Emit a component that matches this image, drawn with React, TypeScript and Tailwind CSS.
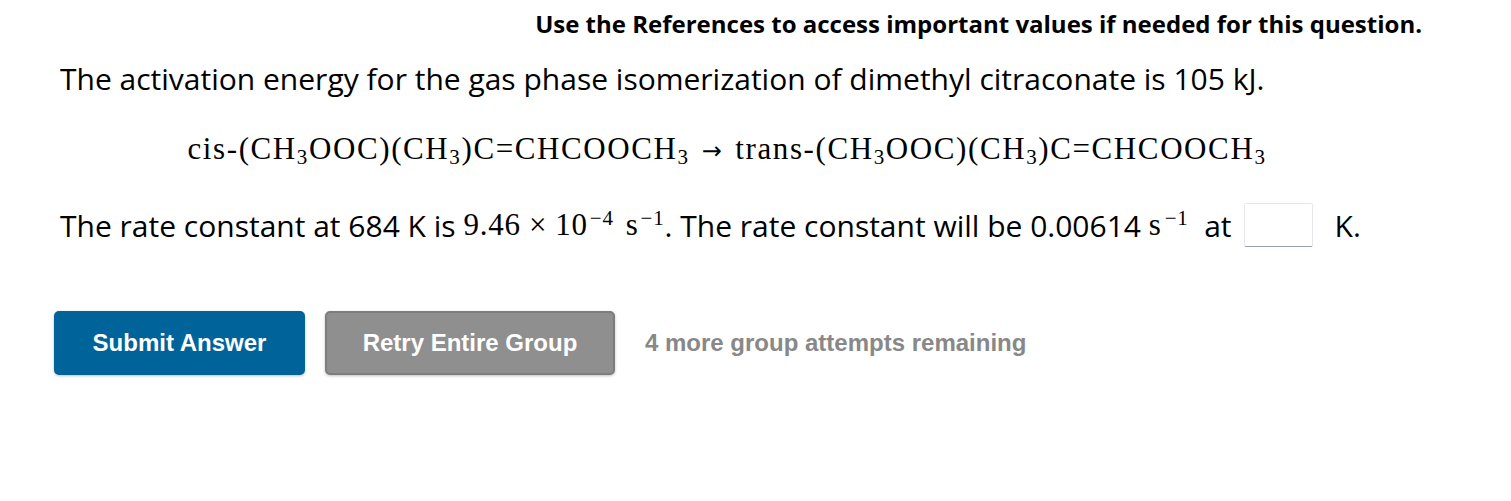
export default function App() {
  const body = { fontFamily: '"Open Sans", "Liberation Sans", sans-serif' }
  const math = { fontFamily: '"Liberation Serif", "DejaVu Serif", serif' }
  const arrow = { fontFamily: '"DejaVu Sans", sans-serif' }
  const btn = { fontFamily: '"Liberation Sans", Arial, sans-serif' }

  return (
    <div className="w-[1511px] h-[501px] bg-white text-black" style={body}>
      <div className="flex justify-end pr-[89px] pt-[6px]">
        <p className="text-[24px] font-bold leading-[36px]">
          Use the References to access important values if needed for this question.
        </p>
      </div>

      <div className="pl-[60px] pr-[117px]">
        <p className="mt-[17px] text-[30px] leading-[40px]">
          The activation energy for the gas phase isomerization of dimethyl citraconate is 105 kJ.
        </p>

        <p className="mt-[30px] text-center text-[31px] leading-[40px] tracking-[1.6px]" style={math}>
          cis-(CH<sub className="text-[21px]">3</sub>OOC)(CH<sub className="text-[21px]">3</sub>)C=CHCOOCH
          <sub className="text-[21px]">3</sub>
          <span className="mx-[12px] text-[24px]" style={arrow}>→</span>
          trans-(CH<sub className="text-[21px]">3</sub>OOC)(CH<sub className="text-[21px]">3</sub>)C=CHCOOCH
          <sub className="text-[21px]">3</sub>
        </p>

        <div className="mt-[31px] flex items-center text-[30px]">
          <span>The rate constant at 684 K is&nbsp;</span>
          <span style={math} className="text-[31px] tracking-[0.8px]">
            9.46<span className="mx-[8px]">×</span>10<sup className="text-[21px] ml-[2px]">−4</sup>
            <span className="ml-[12px]">s</span>
            <sup className="text-[21px] ml-[2px]">−1</sup>
          </span>
          <span>. The rate constant will be 0.00614&nbsp;</span>
          <span style={math} className="text-[31px] tracking-[0.8px]">
            s<sup className="text-[21px] ml-[3px]">−1</sup>
          </span>
          <span>&nbsp;&nbsp;at</span>
          <input
            type="text"
            className="ml-[12px] w-[69px] h-[44px] border border-gray-200 border-b-gray-400 rounded-[2px] bg-white"
          />
          <span className="ml-[22px]">K.</span>
        </div>
      </div>

      <div className="mt-[62px] pl-[54px] flex items-center gap-[20px]" style={btn}>
        <button className="w-[251px] h-[64px] rounded-[5px] bg-[#00639a] text-white text-[24px] font-bold shadow-[0_1px_3px_rgba(0,0,0,0.25)]">
          Submit Answer
        </button>
        <button className="w-[290px] h-[64px] rounded-[5px] bg-[#8f8f8f] border-2 border-[#7d7d7d] text-white text-[24px] font-bold shadow-[0_1px_3px_rgba(0,0,0,0.25)]">
          Retry Entire Group
        </button>
        <span className="ml-[10px] text-[24px] font-bold text-[#888888]">4 more group attempts remaining</span>
      </div>
    </div>
  )
}
